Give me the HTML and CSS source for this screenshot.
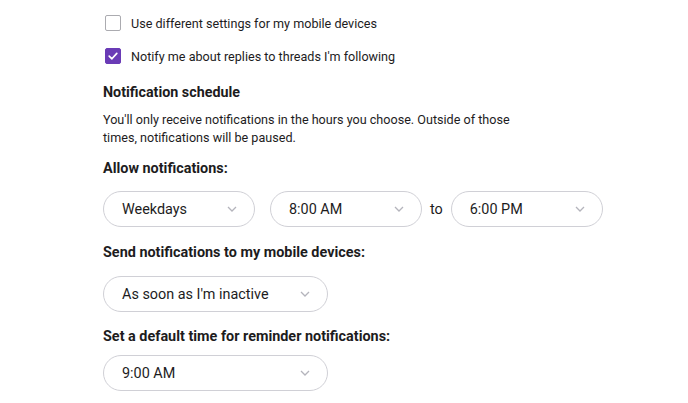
FILE: index.html
```html
<!DOCTYPE html>
<html>
<head>
<meta charset="utf-8">
<link rel="stylesheet" href="styles.css">
</head>
<body>
<div class="page">
  <label class="check-row">
    <span class="box"></span>
    <span class="check-label">Use different settings for my mobile devices</span>
  </label>
  <label class="check-row">
    <span class="box checked">
      <svg width="12" height="12" viewBox="0 0 12 12"><path d="M2.2 6.2 L4.9 8.8 L9.8 3.4" fill="none" stroke="#fff" stroke-width="1.7" stroke-linecap="round" stroke-linejoin="round"/></svg>
    </span>
    <span class="check-label">Notify me about replies to threads I'm following</span>
  </label>

  <h2 class="section-title">Notification schedule</h2>
  <p class="desc">You'll only receive notifications in the hours you choose. Outside of those<br>times, notifications will be paused.</p>

  <h3 class="field-title first">Allow notifications:</h3>
  <div class="select-row">
    <div class="select"><span>Weekdays</span><svg class="chev" width="10" height="6" viewBox="0 0 10 6"><path d="M1 1 L5 5 L9 1" fill="none" stroke="#b4b4bc" stroke-width="1.3"/></svg></div>
    <div class="select"><span>8:00 AM</span><svg class="chev" width="10" height="6" viewBox="0 0 10 6"><path d="M1 1 L5 5 L9 1" fill="none" stroke="#b4b4bc" stroke-width="1.3"/></svg></div>
    <span class="to">to</span>
    <div class="select"><span>6:00 PM</span><svg class="chev" width="10" height="6" viewBox="0 0 10 6"><path d="M1 1 L5 5 L9 1" fill="none" stroke="#b4b4bc" stroke-width="1.3"/></svg></div>
  </div>

  <h3 class="field-title">Send notifications to my mobile devices:</h3>
  <div class="select wide mobile"><span>As soon as I'm inactive</span><svg class="chev" width="10" height="6" viewBox="0 0 10 6"><path d="M1 1 L5 5 L9 1" fill="none" stroke="#b4b4bc" stroke-width="1.3"/></svg></div>

  <h3 class="field-title reminder">Set a default time for reminder notifications:</h3>
  <div class="select wide reminder-select"><span>9:00 AM</span><svg class="chev" width="10" height="6" viewBox="0 0 10 6"><path d="M1 1 L5 5 L9 1" fill="none" stroke="#b4b4bc" stroke-width="1.3"/></svg></div>
</div>
</body>
</html>
```
FILE: styles.css
```css
html, body {
  margin: 0;
  padding: 0;
  background: #ffffff;
}
body {
  font-family: Roboto, "Liberation Sans", sans-serif;
  color: #1d1c1d;
}
.page {
  padding: 14px 0 0 103px;
}
.check-row {
  display: flex;
  align-items: center;
  gap: 10px;
  height: 18px;
  margin-bottom: 15px;
  padding-left: 2px;
}
.box {
  width: 14px;
  height: 14px;
  border: 1px solid #ababb0;
  border-radius: 2px;
  display: flex;
  align-items: center;
  justify-content: center;
  background: #fff;
}
.box.checked {
  background: #6a3bb6;
  border-color: #6a3bb6;
}
.check-label {
  font-size: 12.6px;
  color: #1d1c1d;
}
.section-title {
  font-size: 14.3px;
  font-weight: 700;
  margin: 0;
  line-height: 18px;
  padding-top: 3px;
}
.desc {
  font-size: 12.6px;
  line-height: 18px;
  margin: 10px 0 0 0;
}
.field-title {
  font-size: 14.4px;
  font-weight: 700;
  margin: 17px 0 0 0;
  line-height: 18px;
}
.field-title.first {
  margin-top: 13px;
}
.field-title.reminder {
  margin-top: 16px;
}
.select-row {
  display: flex;
  align-items: center;
  gap: 15px;
  margin-top: 13px;
}
.select-row .to {
  font-size: 14.4px;
  margin: 0 -7px;
}
.select {
  box-sizing: border-box;
  width: 152px;
  height: 36px;
  border: 1px solid #d0d0d6;
  border-radius: 18px;
  display: flex;
  align-items: center;
  justify-content: space-between;
  padding: 0 17px 0 18px;
  font-size: 14.4px;
  color: #1d1c1d;
}
.select.wide {
  width: 225px;
}
.select.mobile {
  margin-top: 14px;
}
.select.reminder-select {
  margin-top: 9px;
}
.chev {
  display: block;
}
```
